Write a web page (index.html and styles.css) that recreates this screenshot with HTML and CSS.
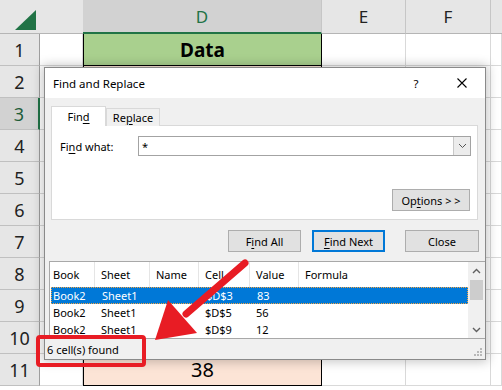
FILE: index.html
```html
<!DOCTYPE html>
<html>
<head>
    <meta charset="UTF-8">
    <title>Find and Replace</title>
    <link rel="stylesheet" href="styles.css">
</head>
<body>

<div class="sheet">
    <div class="hd corner"><span class="tri"></span></div>
    <div class="hd hd-d">D</div>
    <div class="hd">E</div>
    <div class="hd">F</div>
    <div class="hd hd-g"></div>

    <div class="rh">1</div><div class="c"></div><div class="c d data">Data</div><div class="c"></div><div class="c"></div><div class="c"></div>
    <div class="rh">2</div><div class="c"></div><div class="c d"></div><div class="c"></div><div class="c"></div><div class="c"></div>
    <div class="rh on">3</div><div class="c"></div><div class="c d"></div><div class="c"></div><div class="c"></div><div class="c"></div>
    <div class="rh">4</div><div class="c"></div><div class="c d"></div><div class="c"></div><div class="c"></div><div class="c"></div>
    <div class="rh">5</div><div class="c"></div><div class="c d"></div><div class="c"></div><div class="c"></div><div class="c"></div>
    <div class="rh">6</div><div class="c"></div><div class="c d"></div><div class="c"></div><div class="c"></div><div class="c"></div>
    <div class="rh">7</div><div class="c"></div><div class="c d"></div><div class="c"></div><div class="c"></div><div class="c"></div>
    <div class="rh">8</div><div class="c"></div><div class="c d"></div><div class="c"></div><div class="c"></div><div class="c"></div>
    <div class="rh">9</div><div class="c"></div><div class="c d"></div><div class="c"></div><div class="c"></div><div class="c"></div>
    <div class="rh">10</div><div class="c"></div><div class="c d"></div><div class="c"></div><div class="c"></div><div class="c"></div>
    <div class="rh">11</div><div class="c"></div><div class="c d last">38</div><div class="c"></div><div class="c"></div><div class="c"></div>
</div>

<div class="dialog">
    <div class="titlebar">
        <span class="title">Find and Replace</span>
        <span class="help">?</span>
        <span class="close">
            <svg width="10" height="10" viewBox="0 0 10 10"><path d="M0.5 0.5 L9.5 9.5 M9.5 0.5 L0.5 9.5" stroke="#000" stroke-width="1.1" fill="none"/></svg>
        </span>
    </div>

    <div class="dlg-body">
        <div class="tabs">
            <div class="tab active">Fin<u>d</u></div>
            <div class="tab">Re<u>p</u>lace</div>
        </div>
        <div class="panel">
            <div class="find-row">
                <span class="lbl">Fi<u>n</u>d what:</span>
                <div class="combo">
                    <span class="val">*</span>
                    <span class="drop">
                        <svg width="9" height="6" viewBox="0 0 9 6"><path d="M1 1 L4.5 4.5 L8 1" stroke="#555" stroke-width="1" fill="none"/></svg>
                    </span>
                </div>
            </div>
            <div class="opt-row">
                <span class="btn btn-opt">Op<u>t</u>ions &gt; &gt;</span>
            </div>
        </div>
        <div class="actions">
            <span class="btn">F<u>i</u>nd All</span>
            <span class="btn default"><u>F</u>ind Next</span>
            <span class="btn btn-close">Close</span>
        </div>
    </div>

    <div class="results">
        <div class="list">
            <div class="row head">
                <span>Book</span><span>Sheet</span><span>Name</span><span>Cell</span><span>Value</span><span>Formula</span>
            </div>
            <div class="row sel">
                <span>Book2</span><span>Sheet1</span><span></span><span>$D$3</span><span>83</span><span></span>
            </div>
            <div class="row">
                <span>Book2</span><span>Sheet1</span><span></span><span>$D$5</span><span>56</span><span></span>
            </div>
            <div class="row">
                <span>Book2</span><span>Sheet1</span><span></span><span>$D$9</span><span>12</span><span></span>
            </div>
        </div>
        <div class="scroll">
            <span class="arr">
                <svg width="9" height="6" viewBox="0 0 9 6"><path d="M1 5 L4.5 1.5 L8 5" stroke="#606060" stroke-width="1.4" fill="none"/></svg>
            </span>
            <span class="thumb"></span>
            <span class="arr down">
                <svg width="9" height="6" viewBox="0 0 9 6"><path d="M1 1 L4.5 4.5 L8 1" stroke="#606060" stroke-width="1.4" fill="none"/></svg>
            </span>
        </div>
    </div>

    <div class="status">
        <span>6 cell(s) found</span>
        <svg class="grip" width="9" height="9" viewBox="0 0 9 9" fill="#b8b8b8">
            <rect x="6" y="0" width="2" height="2"/>
            <rect x="3" y="3" width="2" height="2"/><rect x="6" y="3" width="2" height="2"/>
            <rect x="0" y="6" width="2" height="2"/><rect x="3" y="6" width="2" height="2"/><rect x="6" y="6" width="2" height="2"/>
        </svg>
    </div>
</div>

<!-- callout drawn over the screenshot -->
<svg class="callout" width="502" height="390" viewBox="0 0 502 390">
    <line x1="245" y1="263" x2="186" y2="314" stroke="#e81c24" stroke-width="7" stroke-linecap="round"/>
    <polygon points="155,340 168,300 197,333" fill="#e81c24"/>
    <rect x="38" y="337" width="106" height="28" rx="2" fill="none" stroke="#e81c24" stroke-width="4"/>
</svg>

</body>
</html>
```

FILE: styles.css
```css
* {
    box-sizing: border-box;
}

html, body {
    margin: 0;
    padding: 0;
    width: 100%;
    height: 100%;
    overflow: hidden;
    background: #fff;
    font-family: "Noto Sans", "Open Sans", sans-serif;
}

/* spreadsheet behind the dialog */

.sheet {
    display: grid;
    grid-template-columns: 40px 43px 239px 84px 85px 1fr;
    grid-template-rows: 34px repeat(11, 32px);
}

.hd {
    display: flex;
    align-items: center;
    justify-content: center;
    background: #e6e6e6;
    border-right: 1px solid #c6c6c6;
    border-bottom: 1px solid #b5b5b5;
    font-size: 17px;
    color: #222;
}

.corner {
    grid-column: 1 / 3;
    justify-content: flex-start;
    align-items: flex-end;
    padding: 0 0 3px 15px;
    border-right: none;
}

.corner .tri {
    width: 0;
    height: 0;
    border-left: 21px solid transparent;
    border-bottom: 20px solid #217346;
}

.hd-d {
    background: #d2d2d2;
    color: #217346;
    border-bottom: 2px solid #217346;
}

.hd-g {
    border-right: none;
}

.rh {
    display: flex;
    align-items: center;
    justify-content: center;
    background: #e6e6e6;
    border-right: 1px solid #9e9e9e;
    border-bottom: 1px solid #c0c0c0;
    font-size: 18px;
    color: #222;
}

.rh.on {
    background: #d2d2d2;
    color: #1d5c38;
    border-right: 2px solid #217346;
}

.c {
    border-right: 1px solid #d9d9d9;
    border-bottom: 1px solid #d9d9d9;
}

.c.d {
    background: #fce4d6;
    border-left: 1px solid #000;
    border-right: 1px solid #000;
    border-bottom: none;
}

.c.data {
    display: flex;
    align-items: center;
    justify-content: center;
    background: #a9d08e;
    border-bottom: 1px solid #000;
    font-size: 19px;
    font-weight: bold;
    color: #000;
}

.c.last {
    display: flex;
    align-items: center;
    justify-content: center;
    border-bottom: 1px solid #000;
    font-size: 20px;
    color: #000;
}

/* dialog */

.dialog {
    position: absolute;
    left: 44px;
    top: 67px;
    width: 442px;
    height: 293px;
    display: flex;
    flex-direction: column;
    background: #f0f0f0;
    border: 1px solid #8a8a8a;
    box-shadow: 0 0 10px 2px rgba(0, 0, 0, 0.22);
    font-size: 11px;
    color: #000;
}

.dialog u {
    text-underline-offset: 2px;
}

.titlebar {
    display: flex;
    align-items: center;
    height: 30px;
    padding-left: 8px;
    background: #fff;
}

.title {
    font-size: 11.5px;
}

.help {
    margin-left: auto;
    width: 46px;
    text-align: center;
    font-size: 11.5px;
}

.close {
    width: 46px;
    display: flex;
    justify-content: center;
}

.dlg-body {
    padding: 8px 7px 0 6px;
}

.tabs {
    display: flex;
    align-items: flex-end;
    height: 20px;
    margin-bottom: -1px;
    position: relative;
}

.tab {
    height: 18px;
    width: 54px;
    display: flex;
    align-items: center;
    justify-content: center;
    border: 1px solid #d9d9d9;
    border-bottom: none;
    background: #f0f0f0;
}

.tab.active {
    height: 20px;
    width: 55px;
    background: #fff;
    padding-bottom: 1px;
}

.panel {
    height: 95px;
    background: #fff;
    border: 1px solid #d9d9d9;
    padding: 10px 6px 0 8px;
}

.find-row {
    display: flex;
    align-items: center;
}

.lbl {
    width: 78px;
}

.combo {
    flex: 1;
    height: 20px;
    display: flex;
    align-items: center;
    border: 1px solid #a3a3a3;
    padding-left: 3px;
}

.combo .val {
    flex: 1;
}

.drop {
    width: 17px;
    height: 18px;
    display: flex;
    align-items: center;
    justify-content: center;
    background: #ececec;
    border-left: 1px solid #c8c8c8;
}

.opt-row {
    display: flex;
    justify-content: flex-end;
    margin-top: 33px;
    padding-right: 1px;
}

.btn {
    display: flex;
    align-items: center;
    justify-content: center;
    width: 73px;
    height: 22px;
    background: #e1e1e1;
    border: 1px solid #adadad;
}

.btn-opt {
    width: 78px;
}

.btn.default {
    border: 2px solid #0078d7;
}

.actions {
    display: flex;
    justify-content: flex-end;
    margin: 10px -1px 0 0;
}

.actions .default {
    margin-left: 11px;
}

.actions .btn-close {
    width: 74px;
    margin-left: 20px;
}

.results {
    display: flex;
    height: 78px;
    margin: 9px 0 0 4px;
    background: #fff;
    border: 1px solid #a8a8a8;
    border-right: none;
}

.list {
    flex: 1;
}

.row {
    display: grid;
    grid-template-columns: 45px 55px 49px 51px 49px 1fr;
    height: 17px;
    align-items: center;
}

.row span {
    padding-left: 6px;
    white-space: nowrap;
}

.row span:first-child {
    padding-left: 3px;
}

.row.head {
    height: 25px;
    align-items: stretch;
}

.row.head span {
    display: flex;
    align-items: center;
    border-right: 1px solid #e5e5e5;
}

.row.head span:last-child {
    border-right: none;
}

.row.sel {
    background: #0078d7;
    color: #fff;
    outline: 1px dotted #f5a442;
    outline-offset: -1px;
    margin-left: 1px;
}

.row.sel span:first-child {
    padding-left: 2px;
}

.scroll {
    width: 17px;
    display: flex;
    flex-direction: column;
    align-items: center;
    background: #f0f0f0;
}

.arr {
    height: 17px;
    display: flex;
    align-items: center;
    justify-content: center;
}

.thumb {
    width: 13px;
    height: 20px;
    margin-top: 1px;
    background: #cdcdcd;
}

.arr.down {
    margin-top: auto;
}

.status {
    flex: 1;
    display: flex;
    align-items: center;
    padding: 0 2px 0 2px;
}

.grip {
    margin: auto 0 2px auto;
}

.callout {
    position: absolute;
    left: 0;
    top: 0;
    pointer-events: none;
}
```
